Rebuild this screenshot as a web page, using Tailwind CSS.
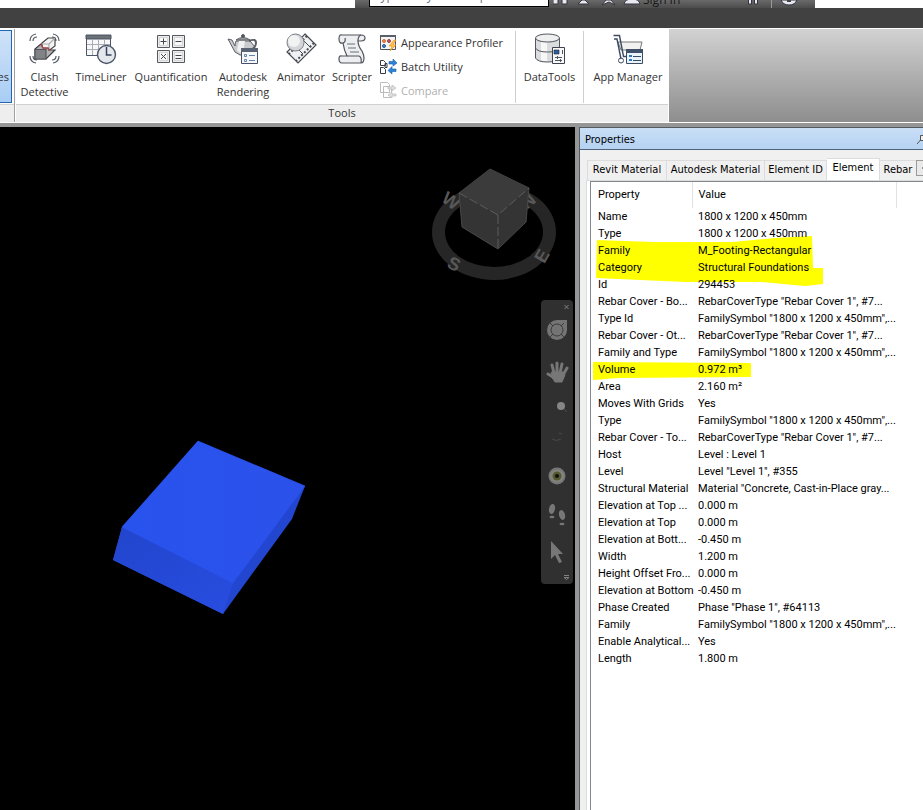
<!DOCTYPE html>
<html lang="en">

<head>
    <meta charset="UTF-8" />
    <meta name="viewport" content="width=device-width, initial-scale=1.0" />
    <title>Model Viewer - Properties</title>
    <script src="https://cdn.jsdelivr.net/npm/@tailwindcss/browser@4"></script>
</head>

<body class="h-screen flex flex-col overflow-hidden bg-[#969696] font-['Open_Sans',sans-serif] text-[11px] text-[#333]">
    <!-- TITLE BAR -->
    <header class="h-2 shrink-0 bg-white overflow-hidden flex">
        <div class="ml-[355px] w-[460px] h-2 bg-linear-to-b from-[#6a6a6a] to-[#4c4c4c] flex items-end">
            <input type="text" aria-label="Search" placeholder="Type a keyword or phrase"
                class="ml-3.5 w-[180px] h-5 mb-px shrink-0 bg-white border border-black px-1 pb-1 text-xs placeholder:text-gray-500" />
            <svg class="ml-1 shrink-0" width="90" height="8" fill="#e8e8f0" stroke="#33333f">
                <path d="M0 0v4h5V0M9 0v4h5V0M25 4h11L32 0h-3zM49 5l4-5h5l4 5-6-3zM71 4q1-5 8-5t8 5z" />
            </svg>
            <a href="#" class="h-4 leading-4 text-xs text-[#161616]">Sign In</a>
            <svg class="ml-auto mr-4 shrink-0" width="52" height="8" fill="#e8e8f0" stroke="#33333f">
                <path d="M1.500 0v4h3V0M7.500 0v4h3V0" />
                <path d="M24.500 0v8" stroke="#999" />
                <path d="M34 0q2 5 8 5t8-5z" /><path d="M40 0h4v2h-4z" fill="#444" stroke="none" />
            </svg>
        </div>
    </header>
    <div class="h-5 shrink-0 bg-[#414141]"></div>

    <!-- RIBBON -->
    <nav class="h-[95px] shrink-0 flex border-y border-white bg-linear-to-b from-[#d2d2d2] to-[#8e8e8e]">
        <div class="w-[14px] shrink-0 flex flex-col bg-white overflow-hidden">
            <button class="w-3 h-[73px] mt-px flex justify-end border border-l-0 border-[#2566b0] bg-linear-to-b from-[#cfe2f8] to-[#a9cdf4] pt-[38px] pr-[2px] leading-[15px]">es</button>
            <div class="mt-px h-[18px] border-t border-[#d0d0d0] bg-[#eeeeee]"></div>
        </div>
        <section class="shrink-0 flex flex-col bg-white border-l border-[#a0a0a0] pl-px pr-px">
            <div class="h-[75px] flex items-start leading-[15px] pt-[4px]">
                <button class="w-[57px] flex flex-col items-center gap-1">
                    <svg width="32" height="32" fill="none" stroke="#555b66" stroke-width="1.200">
                        <path d="M1 8Q1 2 7 1M4 8q0-4 4-4M24 1q6 1 6 7M23 4q4 0 4 4M1 23q0 6 6 7M4 23q0 4 4 4M24 30q6-1 6-7M23 27q4 0 4-4" />
                        <path d="M13 10l6-5h7v8l-8 6h-5z" fill="#f4f4f4" stroke="#444" />
                        <path d="M26 5l-6 6v6M20 11h-7" stroke="#aaa" />
                        <path d="M6 16l6-5 2 4h5l1 2h6l-9 9H6z" fill="#b0b2b5" stroke="#3b3d42" />
                        <path d="M6 16.500h11V26H6z" fill="#808286" stroke="#55575b" />
                        <path d="M12 11l2 4h5l1 3" stroke="#c5433f" />
                    </svg>
                    Clash<br>Detective
                </button>
                <button class="w-[56px] flex flex-col items-center gap-1">
                    <svg width="32" height="32" fill="none" stroke="#4b5567">
                        <path d="M1.500 2.500h24v20h-24z" fill="#f8f8f8" />
                        <path d="M1 2h25v4H1z" fill="#6c7077" />
                        <path d="M2 11.500h23M2 16.500h23M7.500 7v15M13.500 7v15M19.500 7v15" stroke="#a8acb4" />
                        <circle cx="21.500" cy="21.500" r="9" fill="#e4e7ec" stroke-width="1.400" />
                        <path d="M21.500 14v8h5" stroke="#35435c" stroke-width="1.500" />
                    </svg>
                    TimeLiner
                </button>
                <button class="w-[84px] flex flex-col items-center gap-1">
                    <svg width="32" height="32" fill="#ececec" stroke="#55585e">
                        <path d="M2.500 2.500h12v12h-12zM17.500 2.500h12v12h-12zM2.500 17.500h12v12h-12zM17.500 17.500h12v12h-12z" />
                        <path d="M4.500 4.500h8v8h-8zM19.500 4.500h8v8h-8zM4.500 19.500h8v8h-8zM19.500 19.500h8v8h-8z" fill="#f8f8f8" stroke="#d5d5d5" />
                        <path d="M5.500 8.500h6M8.500 5.500v6M20.500 8.500h6M6 21l5 5M11 21l-5 5M20.500 22.500h6M20.500 25.500h6" stroke="#44474d" />
                    </svg>
                    Quantification
                </button>
                <button class="w-[60px] flex flex-col items-center gap-1">
                    <svg width="32" height="32" fill="none" stroke="#5a5e65">
                        <path d="M9 8q-1 3-1 5L5 7 1 6l7 13 5 3h12l3-8-5-6z" fill="#c9cbce" />
                        <path d="M12 8l-2 9q2 4 6 2l2-11z" fill="#f0f1f1" stroke="none" />
                        <path d="M22 8q7-3 7 2 0 4-5 7" stroke-width="2" />
                        <path d="M9 7q7-5 14 0z" fill="#a0a3a7" /><circle cx="16" cy="3" r="1.500" fill="#555" />
                        <path d="M14.500 15.500h16v15h-16z" fill="#f4f6f8" stroke="#475066" />
                        <path d="M14 15h17v4H14z" fill="#5a6373" stroke="none" />
                        <path d="M17.500 21.500h2v2h-2zM17.500 26.500h2v2h-2zM22 22.500h6M22 27.500h6" stroke="#6383ac" />
                    </svg>
                    Autodesk<br>Rendering
                </button>
                <button class="w-[56px] flex flex-col items-center gap-1">
                    <svg width="32" height="32" fill="none" stroke="#454951">
                        <path d="M20 1L31 12 13 30 2 19z" fill="#f0f1f2" stroke-width="1.200" />
                        <path d="M22 3L4 21M29 10L11 28" stroke-dasharray="2 2" stroke-width="2" />
                        <path d="M18 7l7 7M11 14l7 7" />
                        <circle cx="10.500" cy="9.500" r="8.500" fill="#d4d5d8" stroke="#777b82" />
                        <circle cx="9" cy="8" r="6" fill="#f2f2f3" stroke="none" />
                    </svg>
                    Animator
                </button>
                <button class="w-[46px] flex flex-col items-center gap-1">
                    <svg width="32" height="32" fill="#eceef0" stroke="#50545c" stroke-width="1.200">
                        <path d="M6 2h19q4 0 4 3t-4 3h-3q0 5 4 10 2 4 2 7 0 5-3 5H6q-3 0-3-4t3-3h5q-3-6-4-13-4 1-4-4t3-4z" />
                        <path d="M7 10q3-1 2-5M25 2q-3 1-3 6M11 23h12q3 1 2 7" fill="none" />
                        <path d="M11 11h8M12 15h8M14 19h9" stroke="#6b6e74" />
                    </svg>
                    Scripter
                </button>
                <div class="w-[135px] ml-[5px] flex flex-col">
                    <button class="h-6 pb-[5px] flex items-center gap-1 whitespace-nowrap">
                        <svg width="17" height="17" fill="#f4f4f4" stroke="#50545c">
                          <path d="M.5 1.500h15v14H.5z" /><path d="M0 1h16v2H0z" fill="#5a5e68" stroke="none" />
                          <circle cx="4" cy="7" r="1.500" stroke="#d46d35" fill="#e88a4f" /><circle cx="9" cy="7" r="1.500" stroke="#9b3d45" fill="#cf545b" /><circle cx="4" cy="12" r="1.500" stroke="#26599c" fill="#4a81c8" />
                          <path d="M14 6l-5 6h3l-2 5 6-6h-3l3-5z" fill="#ffc24d" stroke="#e09118" stroke-width=".6" />
                        </svg>
                        Appearance Profiler
                    </button>
                    <button class="h-6 pb-[5px] flex items-center gap-1 whitespace-nowrap">
                        <svg width="17" height="17" fill="#fff" stroke="#363b44">
                          <path d="M.5 2.500h3l2 2v3h-5zM.5 9.500h3l2 2v4h-5zM5 5.500h2v4H5z" />
                          <path d="M9 3.500h4V1l4 4-4 3V6H9zM16 11h-4V8.500l-4 4 4 3.500v-2.500h4z" fill="#2d83d5" stroke="#1a5ba4" stroke-width=".6" />
                        </svg>
                        Batch Utility
                    </button>
                    <button disabled class="h-6 pb-[5px] flex items-center gap-1 whitespace-nowrap text-[#b0b0b0]">
                        <svg width="17" height="17" fill="#fff" stroke="#bcbcbc">
                          <path d="M.5.5h7l2 2v8h-9zM3.500 4.500h6l2 2v9h-8z" />
                          <path d="M8 5h4V3l4 3-4 3V7H8zM16 12h-4v-2l-4 3 4 3v-2h4z" fill="#ddd" stroke-width=".7" />
                        </svg>
                        Compare
                    </button>
                </div>
                <div class="w-px h-[72px] -mt-0.5 bg-[#cfcfcf]"></div>
                <button class="w-[67px] flex flex-col items-center gap-1">
                    <svg width="32" height="32" fill="#dadcde" stroke="#53575e">
                        <path d="M1.500 5v20q2 4 12 4t12-4V5" />
                        <path d="M7 8h6v20H9l-2-1z" fill="#f7f7f7" stroke="none" />
                        <ellipse cx="13.500" cy="5" rx="12" ry="4" fill="#efefef" />
                        <path d="M1.500 15q2 4 12 4t12-4" fill="none" />
                        <path d="M18.500 14.500h12v16h-12z" fill="#f8f8f8" stroke="#3c4452" />
                        <path d="M20 17h5v4h-5z" fill="#29609f" stroke="#223" stroke-width=".6" /><path d="M28.500 17v4M21 24.500h7M21 27.500h7M23.500 23v3M26.500 26v3" />
                    </svg>
                    DataTools
                </button>
                <div class="w-px h-[72px] -mt-0.5 bg-[#cfcfcf]"></div>
                <button class="w-[84px] flex flex-col items-center gap-1 pl-1">
                    <svg width="32" height="32" fill="none" stroke="#3d4b62">
                        <path d="M6 9h24l-2 8H9z" fill="#f1f1f1" stroke="#777" />
                        <path d="M1.500 2.500h6l4 21h3M2 6h3l4 20" stroke-width="1.400" />
                        <circle cx="9" cy="27.500" r="2.500" />
                        <path d="M14.500 17.500h16v13h-16z" fill="#e9f3fb" />
                        <path d="M14 16h17v4H14z" fill="#40506b" stroke="none" />
                        <path d="M17 22h3v2h-3zM17 26h3v2h-3z" fill="#2b7cc4" stroke="none" /><path d="M21 23.500h8M21 27.500h8" />
                    </svg>
                    App Manager
                </button>
            </div>
            <div class="h-[18px] border-t border-[#d0d0d0] bg-[#eeeeee] text-center leading-4">Tools</div>
        </section>
    </nav>

    <main class="flex-1 min-h-0 flex pt-1">
        <!-- 3D VIEW -->
        <section class="relative flex-1 min-w-0 bg-black overflow-hidden">
            <svg class="absolute left-[110px] top-[310px]" width="200" height="182">
                <defs>
                    <linearGradient id="front" x1="0" y1="0" x2="1" y2="1">
                        <stop offset="0" stop-color="#2145cc" /><stop offset="1" stop-color="#284de0" />
                    </linearGradient>
                    <linearGradient id="top"><stop offset="0" stop-color="#2953ee" /><stop offset="1" stop-color="#2b51ea" /></linearGradient>
                </defs>
                <path d="M88 4L195 49 182 82 113 177 3 123 12 90z" fill="#2346d0" />
                <path d="M12 90l111 56-10 31L3 123z" fill="url(#front)" />
                <path d="M88 4L195 49 123 146 12 90z" fill="url(#top)" stroke="#2a52ec" stroke-width=".5" />
            </svg>

            <svg class="absolute right-[5px] top-[33px] font-['Liberation_Sans',sans-serif] font-bold" width="140" height="130">
                <path fill-rule="evenodd" fill="#262626" d="M2 72a62 48 0 1 0 124 0a62 48 0 1 0-124 0M15 72a49 35 0 1 0 98 0a49 35 0 1 0-98 0" />
                <g fill="#585858" font-size="18" text-anchor="middle">
                    <text transform="translate(21 41) rotate(35)" y="6">W</text>
                    <text transform="translate(24 104) rotate(25)" y="6">S</text>
                    <text transform="translate(112 96) rotate(-60)" y="6">E</text>
                    <text transform="translate(98 41) rotate(-40)" y="6">N</text>
                </g>
                <path d="M60 9l39 19-3 34-28 27-36-22-3-34z" fill="#343434" stroke="#484848" />
                <path d="M60 9l39 19-31 27-39-22z" fill="#3b3b3b" />
                <path d="M29 33l39 22 31-27M68 55v34" fill="none" stroke="#5c5c5c" stroke-dasharray="9 3" />
            </svg>

            <div class="absolute right-[2px] top-[173px] w-8 h-[284px] rounded bg-[#303030] flex flex-col items-center text-[#808080]">
                <button aria-label="Close" class="self-end mr-1 h-3">
                    <svg width="5" height="8" stroke="currentColor"><path d="M.5 3l4 4M4.500 3l-4 4" /></svg>
                </button>
                <button aria-label="Steering wheel" class="h-9">
                    <svg width="22" height="22" fill="none" stroke="#3c3c3c">
                        <path d="M11 1h10v10a10 10 0 1 1-10-10z" fill="#747474" stroke="none" />
                        <circle cx="11" cy="11" r="6" /><path d="M4 4l3 3M18 4l-3 3M4 18l3-3M18 18l-3-3" />
                    </svg>
                </button>
                <button aria-label="Pan" class="h-12">
                    <svg width="24" height="24" fill="none" stroke="#777" stroke-width="3" stroke-linecap="round">
                        <path d="M9 13L7 5M12 12V3M15 13l2-9M18 15l4-7M8 17l-5-3" />
                        <path d="M7 12h11l2 3-3 7h-7l-4-6z" fill="#777" stroke-width="1" />
                    </svg>
                </button>
                <button aria-label="Zoom" class="h-5 pl-2">
                    <svg width="14" height="14"><circle cx="7" cy="7" r="4" fill="#858585" /><path d="M10 10l3 3" stroke="#4c4c4c" /></svg>
                </button>
                <button aria-label="Orbit" class="h-10">
                    <svg width="16" height="16" fill="none" stroke="#494949"><path d="M3 11q4 3 9 0M10 5l3 1" /></svg>
                </button>
                <button aria-label="Look" class="h-10">
                    <svg width="20" height="20"><circle cx="10" cy="10" r="8.500" fill="#777" /><ellipse cx="10" cy="10" rx="7" ry="6" fill="#858580" /><circle cx="10" cy="10" r="4.500" fill="#55592f" /><circle cx="10" cy="10" r="2" fill="#111" /></svg>
                </button>
                <button aria-label="Walk" class="h-9">
                    <svg width="20" height="24" fill="#777">
                        <ellipse cx="5" cy="7" rx="3" ry="5" transform="rotate(12 5 7)" /><ellipse cx="5" cy="15" rx="2.500" ry="1.200" />
                        <ellipse cx="15" cy="13" rx="3" ry="5" transform="rotate(-16 15 13)" /><ellipse cx="15" cy="22" rx="2.500" ry="1.200" />
                    </svg>
                </button>
                <button aria-label="Select" class="h-10">
                    <svg width="16" height="24" fill="#777"><path d="M2 1v18l4-4 4 8 3-1-4-8h5z" /></svg>
                </button>
                <button aria-label="Options" class="mt-auto self-end mr-1 mb-1">
                    <svg width="5" height="5" fill="none" stroke="currentColor"><path d="M0 .5h5M0 2.500h5l-2.500 2z" /></svg>
                </button>
            </div>
        </section>

        <!-- PROPERTIES PANEL -->
        <aside class="ml-1 w-[344px] shrink-0 flex flex-col border-l border-t border-[#555b63] bg-[#f0f0f0] font-['Roboto',sans-serif] text-[11px] text-black overflow-hidden">
            <div class="h-[22px] shrink-0 flex items-center border-b border-[#50637c] bg-linear-to-b from-[#c9dff6] to-[#b5d2f2] pl-[5px] pt-[3px] font-['DejaVu_Sans_Condensed',sans-serif]">
                <h2>Properties</h2>
                <button aria-label="Auto hide" class="ml-auto">
                    <svg width="6" height="12" fill="#eee" stroke="#555"><path d="M6 1.500H3.500v5H6M3.500 6L0 10" /></svg>
                </button>
            </div>
            <div class="mt-2 ml-[7px] h-[22px] shrink-0 flex items-end whitespace-nowrap font-['DejaVu_Sans_Condensed',sans-serif]">
                <button class="w-20 h-5 shrink-0 border border-b-0 border-[#dcdcdc]">Revit Material</button>
                <button class="w-[98px] h-5 shrink-0 border border-l-0 border-b-0 border-[#dcdcdc]">Autodesk Material</button>
                <button class="w-[62px] h-5 shrink-0 border border-l-0 border-b-0 border-[#dcdcdc]">Element ID</button>
                <button class="w-[53px] h-[22px] pb-0.5 shrink-0 border border-l-0 border-b-0 border-[#dcdcdc] bg-white">Element</button>
                <button class="w-9 h-5 shrink-0 border-t border-[#dcdcdc]">Rebar</button>
                <button aria-label="Scroll tabs left" class="mb-1 w-5 h-4 shrink-0 border border-[#999] bg-[#e9e9e9]">
                    <svg width="8" height="8" class="ml-1"><path d="M5 0v8L1 4z" fill="#333" /></svg>
                </button>
            </div>
            <div class="ml-[6px] flex-1 min-h-0 border-l border-t border-[#dcdcdc] bg-white pl-[3px]">
                <div class="relative h-full border-l border-t border-[#828790] bg-white">
                    <!-- marker strokes behind the rows -->
                    <svg class="absolute left-0 top-0" width="240" height="210" fill="#ffff00">
                        <path d="M6 58l56 2h79l43-4 37-2 1 32h10v16l-18 2-43-4H94l-89-4z" />
                        <path d="M2 180l158 1v14l-133 1-25 2z" />
                    </svg>
                    <table class="relative table-fixed w-[305px] text-left whitespace-nowrap">
                        <colgroup>
                            <col class="w-[101px]" />
                            <col class="w-[204px]" />
                        </colgroup>
                        <thead>
                            <tr class="h-[26px]">
                                <th class="border-r border-[#e2e2e2] pl-[7px] font-normal">Property</th>
                                <th class="border-r border-[#e2e2e2] pl-[6px] font-normal">Value</th>
                            </tr>
                        </thead>
                        <tbody id="rows"></tbody>
                    </table>
                </div>
            </div>
        </aside>
    </main>

    <script>
        const symbol = 'FamilySymbol "1800 x 1200 x 450mm",...';
        const cover = 'RebarCoverType "Rebar Cover 1", #7...';

        const properties = [
            ['Name', '1800 x 1200 x 450mm'],
            ['Type', '1800 x 1200 x 450mm'],
            ['Family', 'M_Footing-Rectangular'],
            ['Category', 'Structural Foundations'],
            ['Id', '294453'],
            ['Rebar Cover - Bo...', cover],
            ['Type Id', symbol],
            ['Rebar Cover - Ot...', cover],
            ['Family and Type', symbol],
            ['Volume', '0.972 m³'],
            ['Area', '2.160 m²'],
            ['Moves With Grids', 'Yes'],
            ['Type', symbol],
            ['Rebar Cover - To...', cover],
            ['Host', 'Level : Level 1'],
            ['Level', 'Level "Level 1", #355'],
            ['Structural Material', 'Material "Concrete, Cast-in-Place gray...'],
            ['Elevation at Top ...', '0.000 m'],
            ['Elevation at Top', '0.000 m'],
            ['Elevation at Bott...', '-0.450 m'],
            ['Width', '1.200 m'],
            ['Height Offset Fro...', '0.000 m'],
            ['Elevation at Bottom', '-0.450 m'],
            ['Phase Created', 'Phase "Phase 1", #64113'],
            ['Family', symbol],
            ['Enable Analytical...', 'Yes'],
            ['Length', '1.800 m']
        ];

        document.getElementById('rows').innerHTML = properties.map(([name, value]) => `
            <tr class="h-[17px] leading-[17px]">
                <td class="pl-[7px]">${name}</td>
                <td class="pl-[6px]">${value}</td>
            </tr>`).join('');
    </script>
</body>

</html>
